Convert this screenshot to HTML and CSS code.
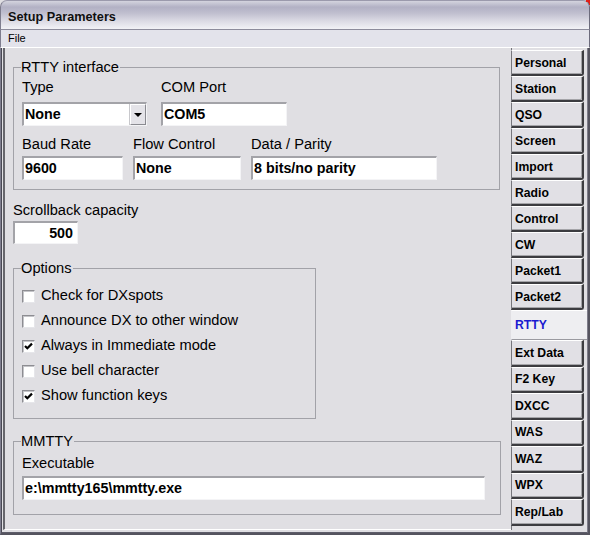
FILE: index.html
```html
<!DOCTYPE html>
<html>
<head>
<meta charset="utf-8">
<title>Setup Parameters</title>
<link rel="stylesheet" href="styles.css">
</head>
<body>
<div class="window">
  <div class="titlebar">
    <span class="title">Setup Parameters</span>
    <span class="close-corner"></span>
  </div>
  <div class="menubar"><span class="menu-item">File</span></div>
  <div class="client">
    <div class="frame-inner">
      <div class="page">
        <fieldset class="group group-rtty">
          <legend>RTTY interface</legend>
          <div class="row row-top">
            <div class="field f-type">
              <div class="lbl">Type</div>
              <div class="combo">
                <span class="val">None</span>
                <span class="drop"><span class="arrow"></span></span>
              </div>
            </div>
            <div class="field f-com">
              <div class="lbl">COM Port</div>
              <div class="input w-com">COM5</div>
            </div>
          </div>
          <div class="row row-bottom">
            <div class="field">
              <div class="lbl">Baud Rate</div>
              <div class="input w-baud">9600</div>
            </div>
            <div class="field">
              <div class="lbl">Flow Control</div>
              <div class="input w-flow">None</div>
            </div>
            <div class="field">
              <div class="lbl">Data / Parity</div>
              <div class="input w-data">8 bits/no parity</div>
            </div>
          </div>
        </fieldset>

        <div class="scrollback">
          <div class="lbl">Scrollback capacity</div>
          <div class="input w-scroll num">500</div>
        </div>

        <fieldset class="group group-options">
          <legend>Options</legend>
          <div class="check-row"><span class="cbox"></span><span class="ctext">Check for DXspots</span></div>
          <div class="check-row"><span class="cbox"></span><span class="ctext">Announce DX to other window</span></div>
          <div class="check-row"><span class="cbox"><svg viewBox="0 0 11 11" width="11" height="11"><path d="M2 5 L4.3 7.3 L9 2.6" fill="none" stroke="#000" stroke-width="2.2"/></svg></span><span class="ctext">Always in Immediate mode</span></div>
          <div class="check-row"><span class="cbox"></span><span class="ctext">Use bell character</span></div>
          <div class="check-row"><span class="cbox"><svg viewBox="0 0 11 11" width="11" height="11"><path d="M2 5 L4.3 7.3 L9 2.6" fill="none" stroke="#000" stroke-width="2.2"/></svg></span><span class="ctext">Show function keys</span></div>
        </fieldset>

        <fieldset class="group group-mmtty">
          <legend>MMTTY</legend>
          <div class="lbl">Executable</div>
          <div class="input w-exe">e:\mmtty165\mmtty.exe</div>
        </fieldset>
      </div>
      <div class="tabs">
        <div class="tab">Personal</div>
        <div class="tab">Station</div>
        <div class="tab">QSO</div>
        <div class="tab">Screen</div>
        <div class="tab">Import</div>
        <div class="tab">Radio</div>
        <div class="tab">Control</div>
        <div class="tab">CW</div>
        <div class="tab">Packet1</div>
        <div class="tab">Packet2</div>
        <div class="tab active">RTTY</div>
        <div class="tab low">Ext Data</div>
        <div class="tab low">F2 Key</div>
        <div class="tab low">DXCC</div>
        <div class="tab low">WAS</div>
        <div class="tab low">WAZ</div>
        <div class="tab low">WPX</div>
        <div class="tab low">Rep/Lab</div>
      </div>
    </div>
  </div>
</div>
</body>
</html>
```

FILE: styles.css
```css
* { box-sizing: border-box; }

html, body {
  margin: 0;
  padding: 0;
}

body {
  width: 590px;
  height: 535px;
  overflow: hidden;
  background: #e0dfe3;
  font-family: "Liberation Sans", Arial, sans-serif;
  color: #000;
}

.window {
  width: 590px;
  height: 535px;
  display: flex;
  flex-direction: column;
  background: #e0dfe3;
  position: relative;
}

/* ---------- title bar ---------- */
.titlebar {
  flex: none;
  height: 30px;
  display: flex;
  align-items: center;
  padding: 4px 0 0 7px;
  background: linear-gradient(to bottom, #d4d4de 0%, #b2b1c4 22%, #c1c0d0 45%, #dad9e3 70%, #f2f2f6 100%);
  border-top: 1px solid #9b9aac;
  border-left: 1px solid #7e7d8e;
  border-right: 1px solid #6c6b7c;
  border-bottom: 1px solid #8d8c9c;
  border-top-left-radius: 7px;
  border-top-right-radius: 7px;
}

.title {
  font-weight: bold;
  font-size: 12.7px;
  line-height: 15px;
  color: #101010;
}

.close-corner {
  position: absolute;
  top: 0;
  right: 0;
  width: 5px;
  height: 5px;
  background: linear-gradient(to bottom left, #e0201a 50%, transparent 50%);
}

/* ---------- menu bar ---------- */
.menubar {
  flex: none;
  height: 18px;
  display: flex;
  align-items: center;
  padding-left: 7px;
  background: #e3e3eb;
  border-left: 1px solid #7e7d8e;
  border-right: 1px solid #6c6b7c;
  border-bottom: 1px solid #ffffff;
}

.menu-item {
  font-size: 11px;
  line-height: 13px;
}

/* ---------- client frame ---------- */
.client {
  flex: 1;
  display: flex;
  border-left: 1px solid #7e7d8e;
  border-right: 2px solid #55545f;
  border-bottom: 2px solid #55545f;
}

.frame-inner {
  flex: 1;
  display: flex;
  border-left: 1px solid #4a4955;
  border-right: 1px solid #7e7d8a;
  border-bottom: 1px solid #5e5d6a;
  padding: 0 0 2px 1px;
}

.page {
  width: 508px;
  flex: none;
  display: flex;
  flex-direction: column;
  align-items: flex-start;
  border-left: 2px solid #66666c;
  border-bottom: 1px solid #ffffff;
  padding-left: 8px;
}

/* ---------- group boxes ---------- */
.group {
  margin: 0;
  min-width: 0;
  border: 1px solid #a2a2a8;
  padding: 0 8px 0 8px;
}

.group legend {
  font-size: 14.67px;
  line-height: 16px;
  padding: 0 1px 0 0;
  margin-left: -1px;
}

.lbl {
  font-size: 14.67px;
  line-height: 16px;
  white-space: nowrap;
}

.group-rtty {
  width: 487px;
  margin-top: 11px;
  padding-top: 4px;
  padding-bottom: 9px;
}

.row {
  display: flex;
}

.row-top {
  gap: 14px;
}

.row-bottom {
  gap: 10px;
  margin-top: 10px;
}

.row-top .lbl {
  margin-bottom: 7px;
}

.row-bottom .lbl {
  margin-bottom: 4px;
}

/* ---------- inputs ---------- */
.input,
.combo {
  height: 24px;
  background: #ffffff;
  border-top: 2px solid #a3a3a8;
  border-left: 2px solid #a3a3a8;
  border-right: 1px solid #f4f4f6;
  border-bottom: 1px solid #f4f4f6;
  font-size: 14.3px;
  font-weight: bold;
  line-height: 21px;
  padding-left: 1px;
  white-space: nowrap;
  overflow: hidden;
}

.combo {
  width: 125px;
  display: flex;
  justify-content: space-between;
  padding-right: 0;
}

.combo .val {
  line-height: 21px;
}

.drop {
  width: 16px;
  height: 21px;
  background: #e4e3e8;
  border-top: 1px solid #ffffff;
  border-left: 1px solid #ffffff;
  border-right: 1px solid #8a8a90;
  border-bottom: 1px solid #8a8a90;
  box-shadow: -1px 0 0 #c8c8cc;
  display: flex;
  align-items: center;
  justify-content: center;
}

.arrow {
  width: 0;
  height: 0;
  border-left: 4px solid transparent;
  border-right: 4px solid transparent;
  border-top: 4px solid #000;
  margin-top: 1px;
}

.w-com { width: 126px; }
.w-baud { width: 101px; }
.w-flow { width: 108px; }
.w-data { width: 186px; }
.w-scroll { width: 65px; height: 23px; line-height: 20px; }
.w-exe { width: 463px; }

.num {
  text-align: right;
  padding-right: 4px;
}

/* ---------- scrollback ---------- */
.scrollback {
  margin-top: 12px;
}

.scrollback .lbl {
  margin-bottom: 3px;
}

/* ---------- options ---------- */
.group-options {
  width: 303px;
  margin-top: 16px;
  padding-top: 8px;
  padding-bottom: 9px;
}

.check-row {
  height: 25px;
  display: flex;
  align-items: center;
}

.cbox {
  width: 13px;
  height: 13px;
  flex: none;
  background: #ffffff;
  border-top: 1px solid #8d8d92;
  border-left: 1px solid #8d8d92;
  border-right: 1px solid #e6e6ea;
  border-bottom: 1px solid #e6e6ea;
  box-shadow: inset 1px 1px 0 #c4c4c8;
  display: flex;
  align-items: center;
  justify-content: center;
}

.cbox svg {
  display: block;
}

.ctext {
  font-size: 14.67px;
  line-height: 16px;
  margin-left: 6px;
  margin-bottom: 4px;
  white-space: nowrap;
}

/* ---------- mmtty ---------- */
.group-mmtty {
  width: 488px;
  margin-top: 14px;
  padding-top: 6px;
  padding-bottom: 14px;
}

.group-mmtty .lbl {
  margin-bottom: 5px;
}

/* ---------- tabs ---------- */
.tabs {
  flex: 1;
  display: flex;
  flex-direction: column;
  padding-top: 2px;
  background: linear-gradient(#76767c, #76767c) left top / 1px 100% no-repeat;
}

.tab {
  flex: none;
  width: 73px;
  height: 26px;
  display: flex;
  align-items: center;
  padding-left: 3px;
  font-size: 12.2px;
  font-weight: bold;
  white-space: nowrap;
  background: #e1e0e5;
  border-left: 1px solid #76767c;
  border-top: 1px solid #ffffff;
  border-right: 2px solid #3c3c40;
  border-bottom: 2px solid #3c3c40;
  border-bottom-right-radius: 3px;
  box-shadow: inset -1px -1px 0 #a4a4a8;
}

.tab.low {
  height: 26.5px;
}

.tab.active {
  width: 76px;
  height: 30px;
  color: #1a1ad0;
  background: #eeeef1;
  border-left: 1px solid #eeeef1;
  border-top: 1px solid #ffffff;
  border-right: none;
  border-bottom: 1px solid #9a9aa0;
  border-radius: 0;
  box-shadow: none;
  padding-left: 3px;
}
```
